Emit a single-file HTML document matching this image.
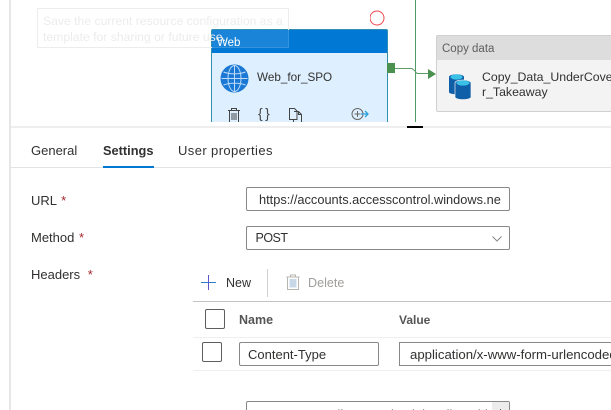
<!DOCTYPE html>
<html><head><meta charset="utf-8">
<style>
html,body{margin:0;padding:0;background:#fff;width:611px;height:410px;overflow:hidden}
#r{position:relative;width:611px;height:410px;overflow:hidden;background:#fff;font-family:"Liberation Sans",sans-serif;color:#323130}
.a{position:absolute;box-sizing:border-box;white-space:nowrap}
.t{font-size:13px;line-height:16px}
.inp{border:1px solid #8a8886;border-radius:2px;background:#fff;font-size:12.8px;line-height:23px;overflow:hidden}
</style></head><body><div id="r">
<div class="a" style="left:9px;top:0;width:2px;height:410px;background:#e6e6e6"></div>

<!-- web card -->
<div class="a" style="left:211px;top:29px;width:177px;height:93px;background:#def0ff;border:1px solid #2f8fb0;border-bottom:0;border-radius:2px 2px 0 0"></div>
<div class="a" style="left:212px;top:30px;width:175px;height:23px;background:#0078d4"></div>
<div class="a" style="left:217px;top:35px;font-size:11.5px;line-height:16px;color:#fff">Web</div>
<svg class="a" style="left:220px;top:64px" width="29" height="29" viewBox="0 0 29 29" fill="none" stroke="#bcdcf8" stroke-width="1">
<circle cx="14.5" cy="14.5" r="13.5" fill="#1b78d4" stroke="#1b78d4"/>
<ellipse cx="14.5" cy="14.5" rx="6.5" ry="13"/><path d="M14.5 1.5V27.5M1.500 14.500H27.500M3.500 8C10 10.500 19 10.500 25.500 8M3.500 21C10 18.500 19 18.500 25.500 21"/></svg>
<div class="a" style="left:257px;top:70px;font-size:11.700px;line-height:16px;color:#323130">Web_for_SPO</div>
<svg class="a" style="left:226px;top:107px" width="16" height="16" viewBox="0 0 16 16" fill="none" stroke="#444" stroke-width="1"><path d="M2 3.500H14M5.500 3.500V1.500H10.500V3.500M3.500 3.500V15.500H12.500V3.500M6 6V13M8 6V13M10 6V13"/></svg>
<div class="a" style="left:258px;top:105px;font-size:14px;line-height:17px;color:#444;letter-spacing:2.500px">{}</div>
<svg class="a" style="left:289px;top:108px" width="15" height="15" viewBox="0 0 15 15" fill="none" stroke="#444" stroke-width="1"><path d="M.5 .5H5.500L8 3V11.500H.5ZM5 3.500H9.500L12.500 6.500V14.500H4.500V11.500M9.500 3.500V6.500H12.500"/></svg>
<svg class="a" style="left:350px;top:107px" width="20" height="14" viewBox="0 0 20 14" fill="none"><circle cx="7.500" cy="7" r="5.500" stroke="#666"/><path d="M4.500 7H10.500M7.500 4V10" stroke="#666"/><path d="M11 7H18M15 4L18 7L15 10" stroke="#2aa0d8" stroke-width="1.300"/></svg>

<!-- tooltip -->
<div class="a" style="left:37px;top:8px;width:175px;height:40px;border:1px solid #ececec;border-right:0"></div>
<div class="a" style="left:212px;top:8px;width:77px;height:22px;border:1px solid #ececec;border-left:0;border-bottom:0"></div>
<div class="a" style="left:212px;top:30px;width:77px;height:18px;background:rgba(255,255,255,.1);border-right:1px solid rgba(255,255,255,.12);border-bottom:1px solid rgba(255,255,255,.12)"></div>
<div class="a" style="left:43px;top:13px;font-size:12.200px;line-height:16px;color:#ececec">Save the current resource configuration as a<br>template for sharing or future use.</div>

<!-- connectors -->
<svg class="a" style="left:370px;top:0" width="70" height="123" viewBox="370 0 70 123" fill="none">
<circle cx="377" cy="18" r="7" stroke="#f0474b" stroke-width="1"/>
<path d="M415.500 0V122" stroke="#4f9a62" stroke-width="1"/>
<rect x="387" y="63" width="8" height="10" fill="#4a904f"/>
<path d="M395 68.500H412L415 71L417 73.500H428" stroke="#5d9c69" stroke-width="1"/>
<path d="M428 69V79L436 74Z" fill="#4a904f"/>
</svg>

<!-- copy card -->
<div class="a" style="left:436px;top:35px;width:180px;height:77px;background:#f3f3f3;border:1px solid #d0d0d0;border-radius:2px"></div>
<div class="a" style="left:437px;top:36px;width:174px;height:24px;background:#dddddd"></div>
<div class="a" style="left:442px;top:42px;font-size:11.500px;line-height:14px;color:#605e5c">Copy data</div>
<svg class="a" style="left:448px;top:72px" width="24" height="28" viewBox="0 0 24 28">
<path d="M1 5C1 1.500 16 1.500 16 5V20C16 23 1 23 1 20Z" fill="#0f5ea8"/><ellipse cx="8.500" cy="5" rx="6" ry="2.600" fill="#39c1e8"/>
<path d="M7 11C7 7 23 7 23 11V25C23 28.500 7 28.500 7 25Z" fill="#0f5ea8" stroke="#f3f3f3" stroke-width=".7"/><ellipse cx="15" cy="11" rx="6.500" ry="2.600" fill="#39c1e8"/></svg>
<div class="a" style="left:482px;top:70px;font-size:12.300px;line-height:15px;color:#323130">Copy_Data_UnderCove<br>r_Takeaway</div>

<!-- splitter -->
<div class="a" style="left:11px;top:122px;width:600px;height:288px;background:#fff"></div>
<div class="a" style="left:11px;top:126px;width:600px;height:2px;background:#eeeeee"></div>
<div class="a" style="left:407px;top:126px;width:16px;height:2px;background:#000"></div>

<!-- tabs -->
<div class="a t" style="left:31px;top:143px;color:#323130">General</div>
<div class="a t" style="left:103px;top:143px;font-weight:bold;font-size:12.800px;color:#323130">Settings</div>
<div class="a t" style="left:178px;top:143px;letter-spacing:.4px;color:#323130">User properties</div>
<div class="a" style="left:11px;top:167px;width:600px;height:1px;background:#e3e3e3"></div>
<div class="a" style="left:103px;top:166px;width:51px;height:2px;background:#0078d4"></div>

<!-- form -->
<div class="a t" style="left:31px;top:193px">URL <span style="color:#a4262c;margin-left:1px">*</span></div>
<div class="a inp" style="left:246px;top:187px;width:264px;height:24px;padding-left:12px;color:#323130">https://accounts.accesscontrol.windows.ne</div>
<div class="a t" style="left:31px;top:230px">Method <span style="color:#a4262c;margin-left:1px">*</span></div>
<div class="a inp" style="left:246px;top:226px;width:264px;height:24px;padding-left:8.500px;font-size:12.500px;letter-spacing:-.5px">POST</div>
<svg class="a" style="left:491px;top:235px" width="12" height="8" viewBox="0 0 12 8" fill="none" stroke="#8a8886"><path d="M1.500 1.500L6 6L10.500 1.500"/></svg>
<div class="a t" style="left:31px;top:267px">Headers <span style="color:#a4262c;margin-left:4px">*</span></div>

<!-- toolbar -->
<svg class="a" style="left:201px;top:275px" width="16" height="16" viewBox="0 0 16 16" fill="none"><path d="M0 7.500H15" stroke="#2f7fd0"/><path d="M7.500 0V15" stroke="#5a55c8"/></svg>
<div class="a t" style="left:226px;top:275px;font-size:12.500px">New</div>
<div class="a" style="left:267px;top:269px;width:1px;height:28px;background:#d0d0d0"></div>
<svg class="a" style="left:286px;top:274px" width="14" height="16" viewBox="0 0 14 16" fill="none" stroke="#b8b4ae"><path d="M.5 3H13.500M4.500 3V1H9.500V3"/><path d="M1.500 3V15.500H12.500V3Z"/><path d="M3.500 5H10.500V13.500H3.500Z" fill="#c8d8e8" stroke="none"/></svg>
<div class="a t" style="left:308px;top:275px;font-size:12.600px;color:#a19f9d">Delete</div>
<div class="a" style="left:193px;top:301px;width:418px;height:1px;background:#c4c4c4"></div>

<!-- table -->
<div class="a" style="left:205px;top:309px;width:20px;height:20px;border:1px solid #605e5c;border-radius:2px"></div>
<div class="a t" style="left:239px;top:312px;font-weight:bold;font-size:12.500px;color:#555">Name</div>
<div class="a t" style="left:399px;top:312px;font-weight:bold;font-size:12px;color:#555">Value</div>
<div class="a" style="left:193px;top:337px;width:418px;height:1px;background:#efefef"></div>
<div class="a" style="left:202px;top:342px;width:20px;height:20px;border:1px solid #605e5c;border-radius:2px"></div>
<div class="a inp" style="left:239px;top:342px;width:140px;height:24px;padding-left:8px;font-size:13px">Content-Type</div>
<div class="a inp" style="left:399px;top:342px;width:220px;height:24px;padding-left:10px;border-radius:0;font-size:13.200px">application/x-www-form-urlencoded</div>
<div class="a" style="left:193px;top:370px;width:418px;height:1px;background:#efefef"></div>

<!-- bottom textarea -->
<div class="a" style="left:246px;top:401px;width:264px;height:20px;border:1px solid #8a8886;border-radius:2px"></div>
<div class="a" style="left:262px;top:407px;font-size:13px;line-height:16px;color:#323130;width:228px;overflow:hidden">grant_type=client_credentials&amp;client_id</div>
<div class="a" style="left:492px;top:402px;width:17px;height:8px;background:#ececec"></div>
<div class="a" style="left:500px;top:409px;width:1px;height:1px;background:#666"></div>
</div></body></html>
